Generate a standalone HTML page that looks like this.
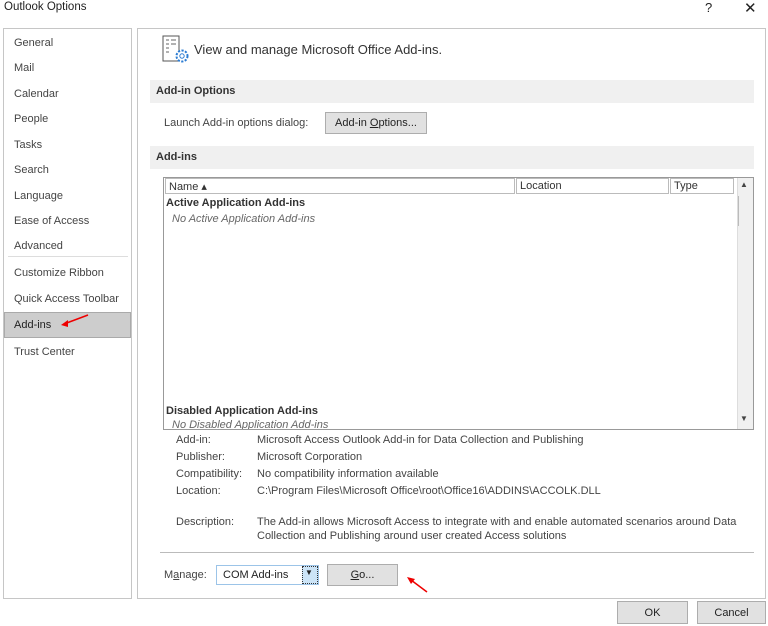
<!DOCTYPE html>
<html><head><meta charset="utf-8"><style>
*{box-sizing:border-box;margin:0;padding:0}
body{width:768px;height:626px;background:#fff;font-family:"Liberation Sans",sans-serif;font-size:11px;color:#444;position:relative;overflow:hidden}
.a{position:absolute;white-space:nowrap}
.nav{position:absolute;left:3px;top:28px;width:129px;height:571px;border:1px solid #c6c6c6}
.nav div{position:absolute;left:10px}
.band{position:absolute;left:150px;width:604px;height:23px;background:#f0f0f0;font-weight:bold;color:#333;padding:5px 6px}
.btn{position:absolute;background:#e1e1e1;border:1px solid #adadad;text-align:center;color:#222}
.hd{position:absolute;top:1px;height:16px;border:1px solid #bbb;padding:1px 3px;color:#333}
</style></head><body>
<div class="a" style="left:4px;top:1px;font-size:11.5px;color:#222">Outlook Options</div>
<div class="a" style="left:705px;top:0;font-size:13px;color:#222">?</div>
<div class="a" style="left:744px;top:-1px;font-size:15px;color:#222">✕</div>

<div class="nav">
<div style="top:8px">General</div>
<div style="top:33px">Mail</div>
<div style="top:59px">Calendar</div>
<div style="top:84px">People</div>
<div style="top:110px">Tasks</div>
<div style="top:135px">Search</div>
<div style="top:161px">Language</div>
<div style="top:186px">Ease of Access</div>
<div style="top:211px">Advanced</div>
<div style="top:227px;left:4px;width:120px;height:1px;background:#ddd"></div>
<div style="top:238px">Customize Ribbon</div>
<div style="top:264px">Quick Access Toolbar</div>
<div style="top:283px;left:0;width:127px;height:26px;background:#cdcdcd;border:1px solid #aaa"></div>
<div style="top:290px;color:#222">Add-ins</div>
<div style="top:317px">Trust Center</div>
</div>
<svg class="a" style="left:58px;top:312px" width="34" height="18"><path d="M30 3 L6 12" stroke="#e00" stroke-width="1.5"/><path d="M3 13 L10 8 L10 15Z" fill="#e00"/></svg>

<div style="position:absolute;left:137px;top:28px;width:629px;height:571px;border:1px solid #c6c6c6"></div>
<svg class="a" style="left:162px;top:35px" width="28" height="30"><rect x="1" y="1" width="16" height="25" fill="#fff" stroke="#555"/><path d="M4 5h3M9 5h5M4 9h3M4 13h3M4 17h3M9 9h5" stroke="#666"/><circle cx="20" cy="21" r="5.5" fill="#fff" stroke="#2b7cd3" stroke-width="2" stroke-dasharray="2.2 1.4"/><circle cx="20" cy="21" r="2.2" fill="none" stroke="#2b7cd3"/></svg>
<div class="a" style="left:194px;top:42px;font-size:13px;color:#333">View and manage Microsoft Office Add-ins.</div>

<div class="band" style="top:80px">Add-in Options</div>
<div class="a" style="left:164px;top:117px">Launch Add-in options dialog:</div>
<div class="btn" style="left:325px;top:112px;width:102px;height:22px;padding-top:4px">Add-in <u>O</u>ptions...</div>
<div class="band" style="top:146px">Add-ins</div>

<div style="position:absolute;left:163px;top:177px;width:591px;height:253px;border:1px solid #999"></div>
<div class="hd" style="left:165px;top:178px;width:350px">Name ▴</div>
<div class="hd" style="left:516px;top:178px;width:153px">Location</div>
<div class="hd" style="left:670px;top:178px;width:64px">Type</div>
<div style="position:absolute;left:737px;top:178px;width:16px;height:251px;background:#f0f0f0;border-left:1px solid #ddd"></div>
<div class="a" style="left:740px;top:180px;font-size:8px">▲</div>
<div class="a" style="left:740px;top:414px;font-size:8px">▼</div>
<div style="position:absolute;left:738px;top:196px;width:1px;height:30px;background:#bbb"></div>
<div class="a" style="left:166px;top:197px;font-weight:bold;color:#333">Active Application Add-ins</div>
<div class="a" style="left:172px;top:213px;font-style:italic;color:#666">No Active Application Add-ins</div>
<div class="a" style="left:166px;top:405px;font-weight:bold;color:#333">Disabled Application Add-ins</div>
<div style="position:absolute;left:164px;top:418px;width:572px;height:11px;overflow:hidden"><div class="a" style="left:8px;top:1px;font-style:italic;color:#666">No Disabled Application Add-ins</div></div>

<div class="a" style="left:176px;top:434px">Add-in:</div>
<div class="a" style="left:176px;top:451px">Publisher:</div>
<div class="a" style="left:176px;top:468px">Compatibility:</div>
<div class="a" style="left:176px;top:485px">Location:</div>
<div class="a" style="left:176px;top:516px">Description:</div>
<div class="a" style="left:257px;top:434px">Microsoft Access Outlook Add-in for Data Collection and Publishing</div>
<div class="a" style="left:257px;top:451px">Microsoft Corporation</div>
<div class="a" style="left:257px;top:468px">No compatibility information available</div>
<div class="a" style="left:257px;top:485px">C:\Program Files\Microsoft Office\root\Office16\ADDINS\ACCOLK.DLL</div>
<div class="a" style="left:257px;top:516px">The Add-in allows Microsoft Access to integrate with and enable automated scenarios around Data</div>
<div class="a" style="left:257px;top:530px">Collection and Publishing around user created Access solutions</div>

<div style="position:absolute;left:160px;top:552px;width:594px;height:1px;background:#bbb"></div>
<div class="a" style="left:164px;top:569px">M<u>a</u>nage:</div>
<div style="position:absolute;left:216px;top:565px;width:103px;height:20px;border:1px solid #9cc4e8;background:#fff"></div>
<div class="a" style="left:223px;top:569px;color:#222">COM Add-ins</div>
<div style="position:absolute;left:302px;top:566px;width:16px;height:18px;background:#cce4f7;border:1px dotted #333"></div>
<div class="a" style="left:305px;top:568px;font-size:8px;color:#222">▼</div>
<div class="btn" style="left:327px;top:564px;width:71px;height:22px;padding-top:4px"><u>G</u>o...</div>
<svg class="a" style="left:403px;top:574px" width="28" height="22"><path d="M24 18 L8 6" stroke="#e00" stroke-width="1.5"/><path d="M4 3 L12 5 L8 10Z" fill="#e00"/></svg>

<div class="btn" style="left:617px;top:601px;width:71px;height:23px;padding-top:5px">OK</div>
<div class="btn" style="left:697px;top:601px;width:69px;height:23px;padding-top:5px">Cancel</div>
</body></html>
